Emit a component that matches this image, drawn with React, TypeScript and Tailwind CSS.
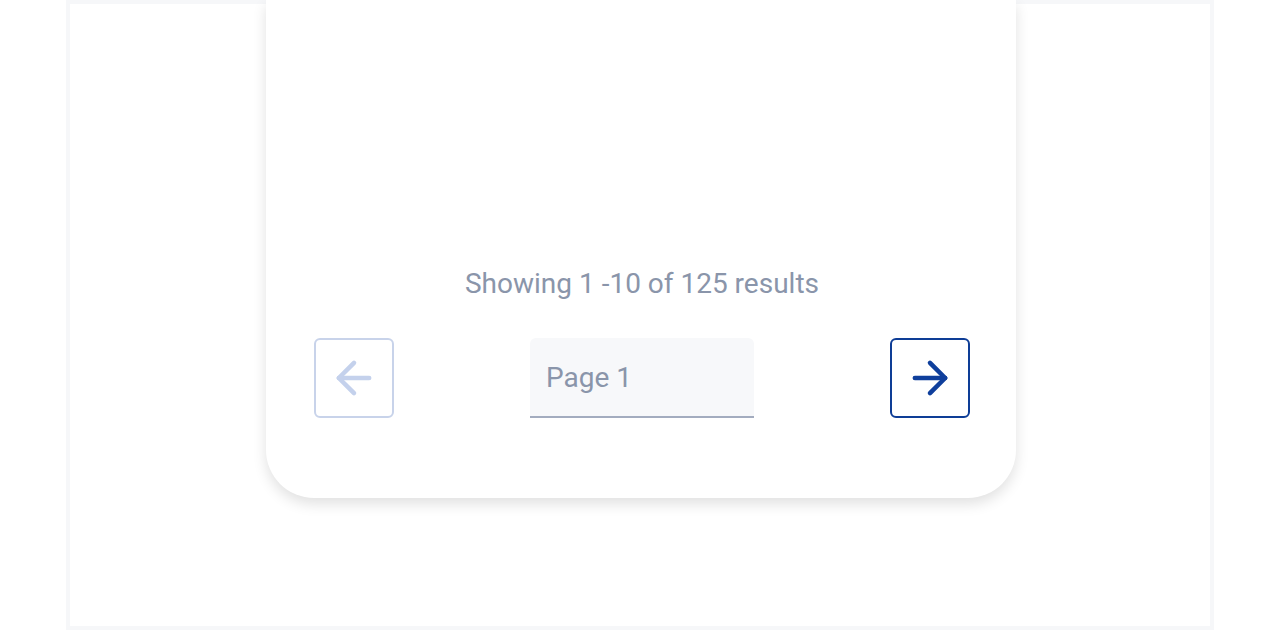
import React from "react";

function Arrow({ dir, color }: { dir: "left" | "right"; color: string }) {
  return (
    <svg width="52" height="52" viewBox="0 0 24 24" fill="none" stroke={color} strokeWidth={2.1} strokeLinecap="round" strokeLinejoin="round">
      {dir === "right" ? (
        <>
          <path d="M5 12h14" />
          <path d="m12 5 7 7-7 7" />
        </>
      ) : (
        <>
          <path d="M19 12H5" />
          <path d="m12 19-7-7 7-7" />
        </>
      )}
    </svg>
  );
}

export default function App() {
  return (
    <div className="w-full h-[630px] bg-white flex justify-center" style={{ fontFamily: "Roboto, 'Noto Sans', sans-serif" }}>
      <div className="w-[1148px] h-[630px] border-4 border-[#f6f7f9] flex justify-center">
        <div className="w-[750px] h-[498px] -mt-1 ml-[2px] bg-white rounded-b-[48px] shadow-[0_6px_14px_rgba(0,0,0,0.12)] flex flex-col pl-12 pr-[46px]">
          <div className="mt-[266px] h-9 flex items-center justify-center text-[28px] text-[#8a95aa]">
            Showing 1 -10 of 125 results
          </div>
          <div className="mt-[36px] flex items-center justify-between">
            <button className="w-20 h-20 rounded-md border-2 border-[#c8d3ea] flex items-center justify-center">
              <Arrow dir="left" color="#c4d1ec" />
            </button>
            <div className="w-[224px] h-20 bg-[#f7f8fa] rounded-t-md border-b-2 border-[#a3acbf] flex items-center px-4 pt-[2px] text-[28px] text-[#8a95aa]">
              Page 1
            </div>
            <button className="w-20 h-20 rounded-md border-2 border-[#0e3d96] flex items-center justify-center">
              <Arrow dir="right" color="#0f3f9c" />
            </button>
          </div>
        </div>
      </div>
    </div>
  );
}
